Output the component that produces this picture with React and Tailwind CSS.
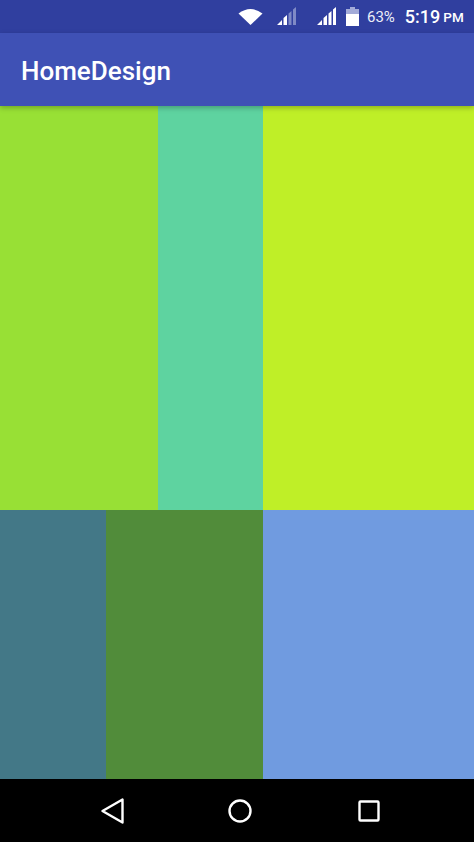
export default function App() {
  return (
    <div className="flex h-[842px] w-[474px] flex-col overflow-hidden bg-black font-['Roboto',sans-serif]">
      {/* status bar */}
      <div className="flex h-[33px] items-center bg-[#303f9f] pl-[238px] text-white">
        <svg width="25" height="17" viewBox="0 0 25 17" className="mt-[-1px]">
          <path d="M0.5 5.5Q12.5 -3.5 24.5 5.5L12.5 17Z" fill="#fff" />
        </svg>
        <svg width="20" height="18" viewBox="0 0 20 18" className="ml-[14px] mt-[-1px]">
          <path d="M0 18L5 13V18ZM6.5 18V11L10 8V18Z" fill="#fff" />
          <path d="M11.5 18V6.5L14.5 4V18ZM16 18V2.5L19 0V18Z" fill="#7f8ac6" />
        </svg>
        <svg width="20" height="18" viewBox="0 0 20 18" className="ml-[20px] mt-[-1px]">
          <path d="M0 18L5 13V18ZM6.5 18V11L10 8V18ZM11.5 18V6.5L14.5 4V18ZM16 18V2.5L19 0V18Z" fill="#fff" />
        </svg>
        <svg width="13" height="19" viewBox="0 0 13 19" className="ml-[9px] mt-[-1px]">
          <path d="M4 0H9V2H13V7H0V2H4Z" fill="#a3abd8" />
          <path d="M0 7H13V19H0Z" fill="#fff" />
        </svg>
        <span className="ml-[8px] mt-[1px] text-[15px] leading-none text-[#eceef8]">63%</span>
        <span className="ml-[10px] mt-[1px] text-[18px] leading-none font-medium">5:19</span>
        <span className="ml-[3px] mt-[3px] text-[13.5px] leading-none font-medium">PM</span>
      </div>

      {/* app bar */}
      <div className="relative z-10 flex h-[73px] items-center bg-[#3f51b5] pl-[21px] pt-[4px] shadow-[0_2px_5px_rgba(0,0,0,0.25)]">
        <h1 className="text-[26px] font-medium text-white">HomeDesign</h1>
      </div>

      {/* colour blocks */}
      <div className="flex h-[673px]">
        <div className="flex w-[263px] flex-col">
          <div className="flex h-[404px]">
            <div className="w-[158px] bg-[#98e035]"></div>
            <div className="flex-1 bg-[#5ed3a0]"></div>
          </div>
          <div className="flex flex-1">
            <div className="w-[106px] bg-[#437887]"></div>
            <div className="flex-1 bg-[#518c3a]"></div>
          </div>
        </div>
        <div className="flex flex-1 flex-col">
          <div className="h-[404px] bg-[#bfef27]"></div>
          <div className="flex-1 bg-[#709be0]"></div>
        </div>
      </div>

      {/* nav bar */}
      <div className="flex h-[63px] items-center bg-black pl-[101px]">
        <svg width="23" height="26" viewBox="0 0 23 26">
          <path d="M21.5 1.5V24.5L1.5 13Z" fill="none" stroke="#fff" strokeWidth="2.4" strokeLinejoin="round" />
        </svg>
        <svg width="24" height="24" viewBox="0 0 24 24" className="ml-[104px]">
          <circle cx="12" cy="12" r="10.5" fill="none" stroke="#fff" strokeWidth="2.4" />
        </svg>
        <svg width="22" height="22" viewBox="0 0 22 22" className="ml-[106px]">
          <rect x="1.5" y="1.5" width="19" height="19" rx="1" fill="none" stroke="#fff" strokeWidth="2.4" />
        </svg>
      </div>
    </div>
  );
}
